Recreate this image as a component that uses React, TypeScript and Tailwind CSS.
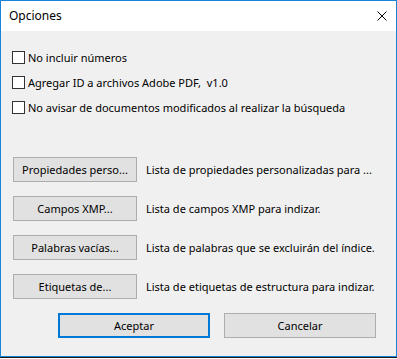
const font = { fontFamily: '"Noto Sans", "Open Sans", sans-serif' };

function Check({ label }: { label: string }) {
  return (
    <div className="flex h-[25px] items-center">
      <div className="h-[13px] w-[13px] shrink-0 border border-[#333333] bg-white" />
      <span className="ml-[3px] whitespace-pre text-[11px] leading-none text-black">{label}</span>
    </div>
  );
}

function Row({ button, text }: { button: string; text: string }) {
  return (
    <div className="flex h-[25px] items-center">
      <button className="flex h-[25px] w-[124px] shrink-0 items-center justify-center border border-[#adadad] bg-[#e1e1e1] text-[11px] leading-none text-black">
        {button}
      </button>
      <span className="ml-[9px] whitespace-nowrap text-[11px] leading-none text-black">{text}</span>
    </div>
  );
}

export default function App() {
  return (
    <div className="h-[359px] w-[397px] bg-white" style={font}>
      <div className="flex h-[357px] w-[397px] flex-col border border-[#1883d7]">
        <div className="flex h-[30px] shrink-0 items-center justify-between bg-white pl-2 pr-[9px]">
          <span className="text-[12px] leading-none text-black">Opciones</span>
          <svg width="10" height="10" viewBox="0 0 10 10">
            <path d="M0.5 0.5 L9.5 9.5 M9.5 0.5 L0.5 9.5" stroke="#000" strokeWidth="1" fill="none" />
          </svg>
        </div>
        <div className="flex flex-1 flex-col bg-[#f0f0f0] pl-[11px] pt-[14px]">
          <Check label="No incluir números" />
          <Check label="Agregar ID a archivos Adobe PDF,  v1.0" />
          <Check label="No avisar de documentos modificados al realizar la búsqueda" />
          <div className="mt-[37px] flex flex-col gap-[14px] pl-[1px]">
            <Row button="Propiedades perso..." text="Lista de propiedades personalizadas para ..." />
            <Row button="Campos XMP..." text="Lista de campos XMP para indizar." />
            <Row button="Palabras vacías..." text="Lista de palabras que se excluirán del índice." />
            <Row button="Etiquetas de..." text="Lista de etiquetas de estructura para indizar." />
          </div>
          <div className="mt-[14px] flex justify-end gap-[14px] pr-[20px]">
            <button className="flex h-[25px] w-[152px] items-center justify-center border-2 border-[#0078d7] bg-[#e1e1e1] text-[11px] leading-none text-black">
              Aceptar
            </button>
            <button className="flex h-[25px] w-[152px] items-center justify-center border border-[#adadad] bg-[#e1e1e1] text-[11px] leading-none text-black">
              Cancelar
            </button>
          </div>
        </div>
      </div>
      <div className="h-[1px] w-[397px] bg-[#1a1a1a]" />
    </div>
  );
}
